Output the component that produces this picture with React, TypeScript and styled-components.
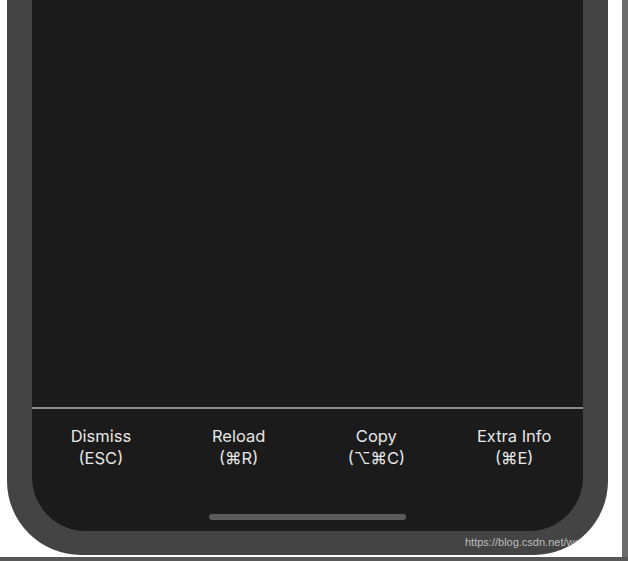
import React from "react";
import styled, { createGlobalStyle } from "styled-components";

const Global = createGlobalStyle`
  html, body { margin: 0; padding: 0; background: #ffffff; }
  body { width: 628px; height: 561px; overflow: hidden; font-family: Inter, "Noto Sans", sans-serif; }
`;

const Page = styled.div`
  width: 628px;
  height: 561px;
  display: flex;
  flex-direction: column;
  background: #ffffff;
`;

const TopRow = styled.div`
  display: flex;
  height: 557px;
`;

const LeftGap = styled.div`
  width: 7px;
  flex: none;
`;

const MidGap = styled.div`
  width: 14px;
  flex: none;
`;

const RightStrip = styled.div`
  width: 6px;
  flex: none;
  background: #6b6b6b;
`;

const FrameCol = styled.div`
  width: 601px;
  flex: none;
  display: flex;
  flex-direction: column;
`;

const Frame = styled.div`
  position: relative;
  height: 555px;
  box-sizing: border-box;
  padding: 0 25px 24px;
  background: #444444;
  border-radius: 0 0 74px 74px;
  overflow: hidden;
`;

const Screen = styled.div`
  height: 531px;
  background: #1b1b1b;
  border-radius: 0 0 54px 54px;
  display: flex;
  flex-direction: column;
`;

const Spacer = styled.div`
  height: 407px;
  flex: none;
`;

const Divider = styled.div`
  height: 2px;
  flex: none;
  background: #8c8c8c;
`;

const Toolbar = styled.div`
  display: grid;
  grid-template-columns: repeat(4, 1fr);
  padding-top: 16px;
`;

const Action = styled.div`
  text-align: center;
  color: #e6e6e6;
  font-size: 16.5px;
  line-height: 22px;
  font-family: Inter, "Noto Sans", "DejaVu Sans", sans-serif;
`;

const Home = styled.div`
  margin: 45px auto 0;
  width: 197px;
  height: 6px;
  flex: none;
  border-radius: 3px;
  background: #5c5c5c;
`;

const Watermark = styled.div`
  position: absolute;
  left: 458px;
  top: 536px;
  font-family: "Liberation Sans", Arial, sans-serif;
  font-size: 11px;
  color: #bdbdbd;
  white-space: nowrap;
`;

const BottomStrip = styled.div`
  height: 4px;
  background: #585858;
`;

const actions = [
  ["Dismiss", "(ESC)"],
  ["Reload", "(⌘R)"],
  ["Copy", "(⌥⌘C)"],
  ["Extra Info", "(⌘E)"],
];

export default function App() {
  return (
    <>
      <Global />
      <Page>
        <TopRow>
          <LeftGap />
          <FrameCol>
            <Frame>
              <Screen>
                <Spacer />
                <Divider />
                <Toolbar>
                  {actions.map(([a, b]) => (
                    <Action key={a}>
                      {a}
                      <br />
                      {b}
                    </Action>
                  ))}
                </Toolbar>
                <Home />
              </Screen>
              <Watermark>https://blog.csdn.net/weixin</Watermark>
            </Frame>
          </FrameCol>
          <MidGap />
          <RightStrip />
        </TopRow>
        <BottomStrip />
      </Page>
    </>
  );
}
